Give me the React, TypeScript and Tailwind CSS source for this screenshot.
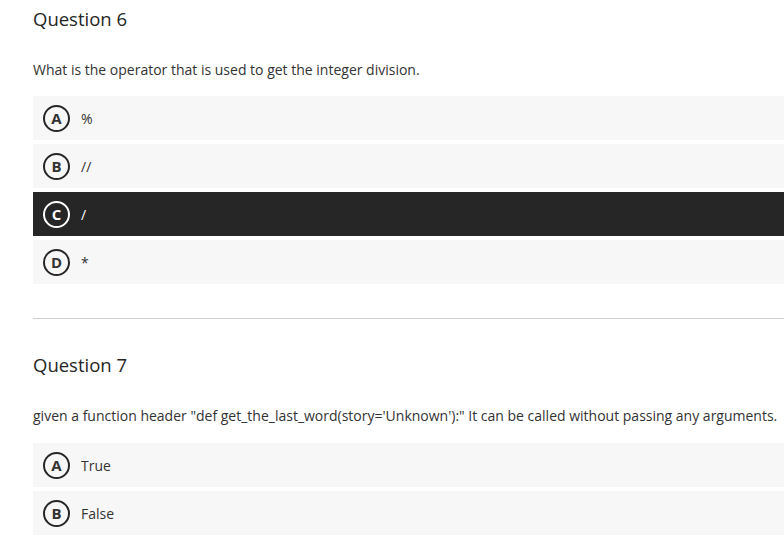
const FONT = "font-['Open_Sans',_'Liberation_Sans',_sans-serif]";

type Option = { letter: string; text: string; selected?: boolean };

function OptionRow({ letter, text, selected }: Option) {
  return (
    <div
      className={`flex h-[44px] items-center pl-[10px] ${
        selected ? "bg-[#262626] text-white" : "bg-[#f7f7f7] text-[#333]"
      }`}
    >
      <span
        className={`flex h-[27px] w-[27px] items-center justify-center rounded-full border-2 text-[15px] font-bold leading-none ${
          selected ? "border-white" : "border-[#262626]"
        }`}
      >
        {letter}
      </span>
      <span className="ml-[11px] text-[14px]">{text}</span>
    </div>
  );
}

function Question({
  title,
  prompt,
  options,
  gap,
}: {
  title: string;
  prompt: string;
  options: Option[];
  gap: string;
}) {
  return (
    <div>
      <h2 className="text-[18.5px] leading-[26px] text-[#262626]">{title}</h2>
      <p className="mt-[27px] text-[14px] leading-[22px] text-[#333] whitespace-nowrap">
        {prompt}
      </p>
      <div className={`${gap} flex flex-col gap-[4px]`}>
        {options.map((o) => (
          <OptionRow key={o.letter} {...o} />
        ))}
      </div>
    </div>
  );
}

export default function App() {
  return (
    <div className={`${FONT} h-[540px] w-[784px] overflow-hidden bg-white pl-[33px] pt-[6px]`}>
      <Question
        title="Question 6"
        prompt="What is the operator that is used to get the integer division."
        gap="mt-[15px]"
        options={[
          { letter: "A", text: "%" },
          { letter: "B", text: "//" },
          { letter: "C", text: "/", selected: true },
          { letter: "D", text: "*" },
        ]}
      />
      <hr className="mt-[34px] border-t border-[#cfcfcf]" />
      <div className="mt-[33px]">
        <Question
          title="Question 7"
          prompt={`given a function header "def get_the_last_word(story='Unknown'):" It can be called without passing any arguments.`}
          gap="mt-[16px]"
          options={[
            { letter: "A", text: "True" },
            { letter: "B", text: "False" },
          ]}
        />
      </div>
    </div>
  );
}
